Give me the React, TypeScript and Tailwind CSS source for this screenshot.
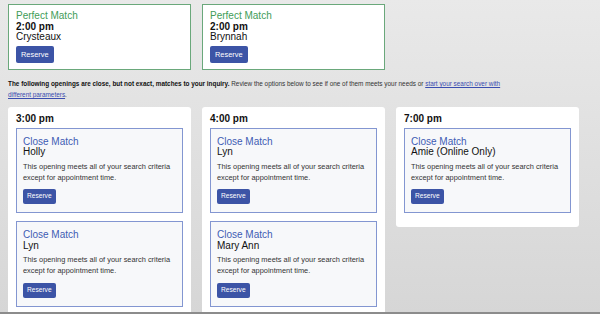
import React from 'react'

const PERFECT = [
  { time: '2:00 pm', name: 'Crysteaux' },
  { time: '2:00 pm', name: 'Brynnah' },
]

const CLOSE = [
  { time: '3:00 pm', people: ['Holly', 'Lyn'] },
  { time: '4:00 pm', people: ['Lyn', 'Mary Ann'] },
  { time: '7:00 pm', people: ['Amie (Online Only)'] },
]

function CloseCard({ name }: { name: string }) {
  return (
    <div className="border border-[#8396d1] bg-[#f7f8fa] px-[6px] pt-[8px] pb-[8px]">
      <div className="text-[10px] leading-[10.5px] text-[#3e5cb4]">Close Match</div>
      <div className="text-[10px] leading-[10.5px] text-[#111]">{name}</div>
      <p className="mt-[3px] text-[7.4px] leading-[11px] text-[#333]">
        This opening meets all of your search criteria
        <br />
        except for appointment time.
      </p>
      <button className="block mt-[6.5px] h-[15px] px-[4px] rounded-[2px] bg-[#3c54a6] text-white text-[6.6px] leading-none">
        Reserve
      </button>
    </div>
  )
}

export default function App() {
  return (
    <div className="h-[314px] overflow-hidden flex flex-col bg-gradient-to-b from-[#e9e9e9] to-[#d6d6d6] font-['Liberation_Sans',Arial,sans-serif]">
      <div className="flex-1 overflow-hidden pl-2 pt-1">
        <div className="grid grid-cols-[183px_183px_183px] gap-x-[11px]">
          {PERFECT.map((p, i) => (
            <div key={i} className="border border-[#6aa87b] bg-white pl-[7px] pr-2 pt-[6px] pb-[6px]">
              <div className="text-[10px] leading-[10.5px] text-[#429c58]">Perfect Match</div>
              <div className="text-[10px] leading-[10.5px] font-bold text-[#111]">{p.time}</div>
              <div className="text-[10px] leading-[10.5px] text-[#111]">{p.name}</div>
              <button className="block mt-[3.5px] h-[17px] px-[5px] rounded-[2px] bg-[#3c54a6] text-white text-[7.4px] leading-none">
                Reserve
              </button>
            </div>
          ))}
        </div>

        <p className="mt-[8px] w-[510px] text-[6.4px] leading-[11px] text-[#333]">
          <span className="font-bold text-[#111]">
            The following openings are close, but not exact, matches to your inquiry.
          </span>{' '}
          Review the options below to see if one of them meets your needs or{' '}
          <a href="#" className="text-[#3a4db0] underline">
            start your search over with different parameters
          </a>
          .
        </p>

        <div className="mt-[7px] grid grid-cols-[183px_183px_183px] gap-x-[11px] items-start">
          {CLOSE.map((c, i) => (
            <div key={i} className="bg-white rounded-[3px] px-2 pt-[7px] pb-[14px]">
              <div className="mb-[3px] text-[10px] leading-[10.5px] font-bold text-[#111]">{c.time}</div>
              <div className="flex flex-col gap-2">
                {c.people.map((n, j) => (
                  <CloseCard key={j} name={n} />
                ))}
              </div>
            </div>
          ))}
        </div>
      </div>
      <div className="h-[2px] bg-[#8c8c8c]" />
    </div>
  )
}
